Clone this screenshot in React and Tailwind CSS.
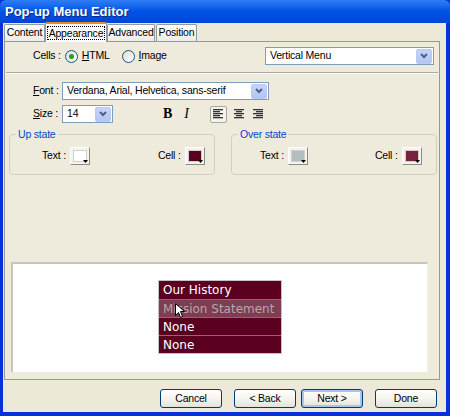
import React from "react";

const font = { fontFamily: '"Liberation Sans", Arial, sans-serif' };

const Radio = ({ checked }) => (
  <span className="flex h-[13px] w-[13px] items-center justify-center rounded-full border border-[#1c5180] bg-linear-to-br from-[#dcdcd7] to-white">
    {checked && <span className="h-[5px] w-[5px] rounded-full bg-[#21a121]" />}
  </span>
);

const DropArrow = () => (
  <span className="flex h-[15px] w-[16px] items-center justify-center rounded-[2px] bg-linear-to-b from-[#c6d3f7] to-[#b1c6f5] border border-[#b8cbf6]">
    <svg width="8" height="6" viewBox="0 0 8 6">
      <path d="M1 1 L4 4 L7 1" stroke="#4d6185" strokeWidth="2" fill="none" />
    </svg>
  </span>
);

const Select = ({ value, className }) => (
  <div className={`flex h-[18px] items-center justify-between border border-[#7f9db9] bg-white pl-[4px] pr-[1px] ${className}`}>
    <span className="text-[10.5px] tracking-[-0.2px] text-black">{value}</span>
    <DropArrow />
  </div>
);

const Swatch = ({ color }) => (
  <div className="relative h-[18px] w-[20px] border border-t-white border-l-white border-r-[#8d8b82] border-b-[#8d8b82] bg-[#f4f3ee] p-[2px]">
    <div className="h-full w-full border border-[#d0cfc8]" style={{ backgroundColor: color }} />
    <svg className="absolute right-[1px] bottom-[1px]" width="5" height="3" viewBox="0 0 5 3">
      <path d="M0 0 H5 L2.5 3 Z" fill="#000" />
    </svg>
  </div>
);

const Group = ({ title, text, cell, textGap, cellGap }) => (
  <div className="relative h-[41px] flex-1 rounded-[4px] border border-[#d0d0bf]">
    <span className="absolute -top-[7px] left-[6px] bg-[#eeebdd] px-[2px] text-[10.5px] tracking-[-0.2px] leading-[13px] text-[#0046d5]">
      {title}
    </span>
    <div className="flex h-full items-center pt-[2px]">
      <div className="flex items-center" style={{ marginLeft: textGap }}>
        <span className="mr-[4px] text-[10.5px] tracking-[-0.2px]">Text :</span>
        <Swatch color={text} />
      </div>
      <div className="flex items-center" style={{ marginLeft: cellGap }}>
        <span className="mr-[4px] text-[10.5px] tracking-[-0.2px]">Cell :</span>
        <Swatch color={cell} />
      </div>
    </div>
  </div>
);

const AlignIcon = ({ type }) => {
  const rows = [0, 2, 4, 6, 8];
  const widths = type === "center" ? [10, 6, 10, 6, 10] : [10, 7, 10, 7, 10];
  return (
    <svg width="11" height="10" viewBox="0 0 11 10">
      {rows.map((y, i) => {
        const w = widths[i];
        const x = type === "left" ? 0 : type === "center" ? (10 - w) / 2 : 10 - w;
        return <rect key={y} x={x} y={y} width={w} height="1.3" fill="#333" />;
      })}
    </svg>
  );
};

const XPButton = ({ label, primary }) => (
  <div
    className={`flex h-[19px] w-[62px] items-center justify-center rounded-[3px] border border-[#003c74] bg-linear-to-b from-white via-[#f5f4ee] to-[#e3e2da] text-[10.5px] tracking-[-0.2px] ${
      primary ? "shadow-[inset_0_0_0_2px_#a8c4ef]" : ""
    }`}
  >
    {label}
  </div>
);

const Tab = ({ label, w, className = "" }) => (
  <div
    className={`flex h-[17px] items-center justify-center rounded-t-[2px] border border-b-0 border-[#919b9c] bg-linear-to-b from-white to-[#ecebe5] text-[10.5px] tracking-[-0.2px] ${className}`}
    style={{ width: w }}
  >
    {label}
  </div>
);

const menuItems = ["Our History", "Mission Statement", "None", "None"];

export default function App() {
  return (
    <div className="h-[416px] w-[450px] bg-[#0831d9] pb-[4px]" style={font}>
      {/* title bar */}
      <div className="flex h-[23px] items-center rounded-t-[6px] bg-linear-to-b from-[#2e7ef6] via-[#0052e5] to-[#0045d6] pl-[5px]">
        <span className="text-[13px] font-bold text-white [text-shadow:1px_1px_0_#0a2a8a]">Pop-up Menu Editor</span>
      </div>

      <div className="ml-[3px] mr-[4px] flex h-[389px] flex-col bg-[#ece9d8] text-black">
        {/* tabs */}
        <div className="flex h-[18px] items-end pl-[1px] pt-[1px]">
          <Tab label="Content" w={41} />
          <div className="relative z-10 -mb-[1px] flex h-[20px] w-[62px] items-center justify-center rounded-t-[2px] border border-b-0 border-t-2 border-[#919b9c] border-t-[#e68b2c] bg-[#fcfcfe] text-[10.5px] tracking-[-0.2px]">
            <span className="border border-dotted border-black px-[1px] leading-[12px]">Appearance</span>
          </div>
          <Tab label="Advanced" w={48} />
          <Tab label="Position" w={41} className="ml-[1px]" />
        </div>

        {/* tab panel */}
        <div className="ml-[1px] mr-[6px] flex h-[339px] flex-col border border-[#919b9c] bg-[#eeebdd]">
          {/* cells row */}
          <div className="mt-[5px] flex h-[18px] items-center pl-[28px] pr-[5px]">
            <span className="text-[10.5px] tracking-[-0.2px]">Cells :</span>
            <span className="ml-[4px] flex items-center gap-[4px]">
              <Radio checked />
              <span className="text-[10.5px] tracking-[-0.2px]">
                <span className="underline">H</span>TML
              </span>
            </span>
            <span className="ml-[12px] flex items-center gap-[4px]">
              <Radio />
              <span className="text-[10.5px] tracking-[-0.2px]">
                <span className="underline">I</span>mage
              </span>
            </span>
            <Select value="Vertical Menu" className="ml-auto w-[169px]" />
          </div>

          {/* separator */}
          <div className="mx-[1px] mt-[7px] h-[2px] border-t border-b border-t-[#aca899] border-b-white" />

          {/* font row */}
          <div className="mt-[8px] flex h-[18px] items-center pl-[28px]">
            <span className="w-[29px] text-[10.5px] tracking-[-0.2px]">
              <span className="underline">F</span>ont :
            </span>
            <Select value="Verdana, Arial, Helvetica, sans-serif" className="w-[207px]" />
          </div>

          {/* size row */}
          <div className="mt-[5px] flex h-[18px] items-center pl-[28px]">
            <span className="w-[29px] text-[10.5px] tracking-[-0.2px]">
              <span className="underline">S</span>ize :
            </span>
            <Select value="14" className="w-[51px]" />
            <span
              className="ml-[50px] text-[14px] font-bold leading-none"
              style={{ fontFamily: '"Liberation Serif", serif' }}
            >
              B
            </span>
            <span
              className="ml-[12px] text-[14px] italic leading-none"
              style={{ fontFamily: '"Liberation Serif", serif' }}
            >
              I
            </span>
            <span className="ml-[21px] flex h-[17px] w-[17px] items-center justify-center rounded-[2px] border border-[#aca899] bg-[#f4f3ee]">
              <AlignIcon type="left" />
            </span>
            <span className="ml-[4px] flex h-[17px] w-[17px] items-center justify-center">
              <AlignIcon type="center" />
            </span>
            <span className="ml-[2px] flex h-[17px] w-[17px] items-center justify-center">
              <AlignIcon type="right" />
            </span>
          </div>

          {/* state groups */}
          <div className="mt-[11px] flex gap-[16px] pl-[4px] pr-[2px]">
            <Group title="Up state" text="#ffffff" cell="#5c0022" textGap={32} cellGap={68} />
            <Group title="Over state" text="#b4bebe" cell="#7a2340" textGap={28} cellGap={67} />
          </div>

          {/* preview */}
          <div className="mt-[87px] ml-[6px] h-[110px] w-[417px] border-t-2 border-l-2 border-r border-t-[#c7c4b8] border-l-[#c7c4b8] border-r-[#f2f1ea] bg-white pt-[16px]">
            <div className="relative ml-[145px] w-[124px] border border-[#c9c2c4] bg-[#5c0022]">
              {menuItems.map((item, i) => (
                <div
                  key={i}
                  className={`flex h-[18px] items-center pl-[4px] text-[12px] ${
                    i > 0 ? "border-t border-[#8a6a74]" : ""
                  } ${i === 1 ? "bg-[#7e3d50] text-[#b6a6ac]" : "text-white"}`}
                  style={{ fontFamily: '"DejaVu Sans", Verdana, sans-serif' }}
                >
                  {item}
                </div>
              ))}
              <svg className="absolute left-[16px] top-[22px]" width="11" height="16" viewBox="0 0 11 16">
                <path d="M0.5 0.5 L0.5 12.5 L3.5 9.5 L5.5 14.5 L7.5 13.5 L5.5 8.5 L9.5 8.5 Z" fill="#fff" stroke="#000" strokeWidth="1" />
              </svg>
            </div>
          </div>
        </div>

        {/* buttons */}
        <div className="mt-[9px] flex items-center pl-[157px]">
          <XPButton label="Cancel" />
          <div className="ml-[12px]">
            <XPButton label="< Back" />
          </div>
          <div className="ml-[5px]">
            <XPButton label="Next >" primary />
          </div>
          <div className="ml-[12px]">
            <XPButton label="Done" />
          </div>
        </div>
      </div>
    </div>
  );
}
